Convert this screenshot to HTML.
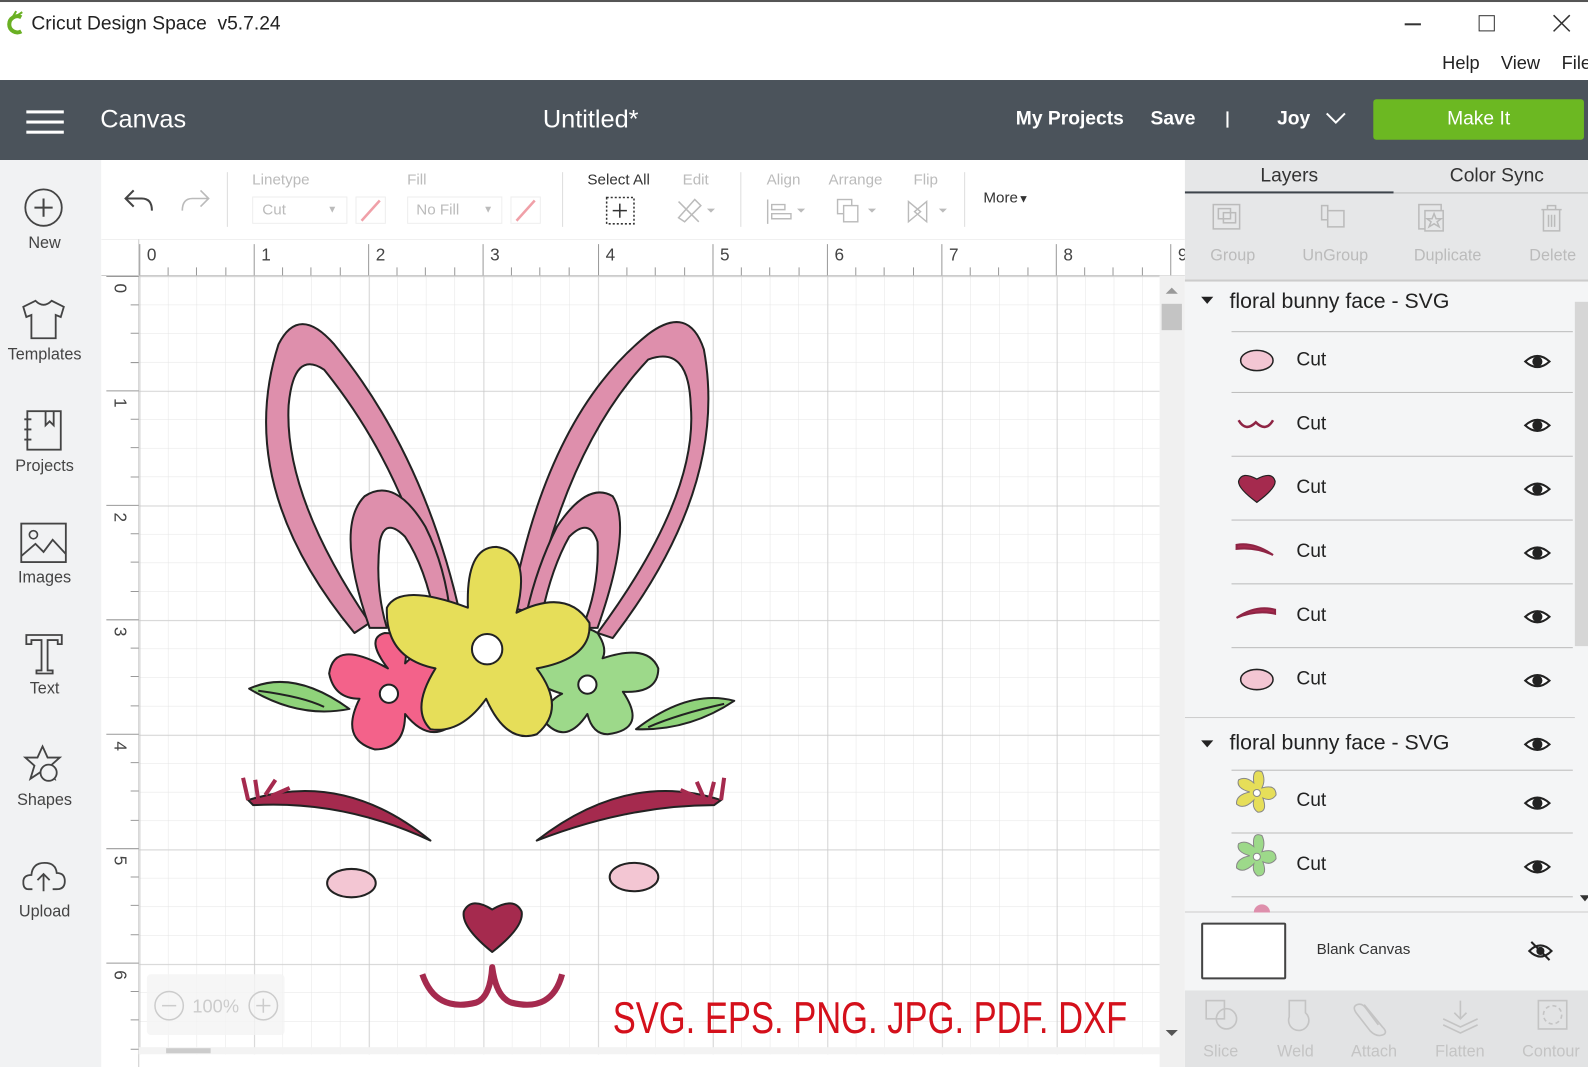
<!DOCTYPE html>
<html><head><meta charset="utf-8">
<style>
*{margin:0;padding:0;box-sizing:border-box}
body{width:1588px;height:1054px;overflow:hidden;background:#fff;font-family:"Liberation Sans",sans-serif;position:relative;color:#222}
#w{position:absolute;left:0;top:0;width:1568px;height:1041px;transform:scale(1.01276);transform-origin:0 0}
.a{position:absolute}
.t{white-space:nowrap}
</style></head><body><div id="w">
<!-- title bar -->
<div class="a" style="left:0;top:0;width:1588px;height:2px;background:#555"></div>
<svg class="a" style="left:4px;top:10px" width="22" height="26"><path d="M17 7 A8 8 0 1 0 17 21" stroke="#6ab023" stroke-width="4" fill="none"/><path d="M9 6 L12 1 M12 6 L18 2" stroke="#6ab023" stroke-width="2"/></svg>
<div class="a t" style="left:31px;top:13px;font-size:19px;color:#222">Cricut Design Space&nbsp; v5.7.24</div>
<div class="a" style="left:1387px;top:23px;width:16px;height:1.5px;background:#333"></div>
<div class="a" style="left:1460px;top:15px;width:16px;height:16px;border:1.5px solid #333"></div>
<svg class="a" style="left:1533px;top:14px" width="18" height="18"><path d="M1 1L17 17M17 1L1 17" stroke="#333" stroke-width="1.5"/></svg>
<div class="a t" style="left:1424px;top:52px;font-size:18px">Help</div>
<div class="a t" style="left:1482px;top:52px;font-size:18px">View</div>
<div class="a t" style="left:1542px;top:52px;font-size:18px">File</div>
<!-- header -->
<div class="a" style="left:0;top:79px;width:1588px;height:79px;background:#4b535b"></div>
<div class="a" style="left:26px;top:109px;width:37px;height:3px;background:#fff;box-shadow:0 10px 0 #fff,0 20px 0 #fff"></div>
<div class="a t" style="left:99px;top:104px;font-size:25px;color:#fff">Canvas</div>
<div class="a t" style="left:536px;top:104px;font-size:25px;color:#fff">Untitled*</div>
<div class="a t" style="left:1003px;top:107px;font-size:19px;color:#fff;font-weight:bold">My Projects</div>
<div class="a t" style="left:1136px;top:107px;font-size:19px;color:#fff;font-weight:bold">Save</div>
<div class="a" style="left:1211px;top:110px;width:2px;height:16px;background:#fff"></div>
<div class="a t" style="left:1261px;top:107px;font-size:19px;color:#fff;font-weight:bold">Joy</div>
<svg class="a" style="left:1309px;top:111px" width="20" height="12"><path d="M1 1L10 10L19 1" stroke="#fff" stroke-width="2" fill="none"/></svg>
<div class="a" style="left:1356px;top:98px;width:208px;height:40px;background:#6cb822;border-radius:3px;color:#fff;font-size:19px;text-align:center;line-height:40px">Make It</div>
<!-- left sidebar -->
<div class="a" style="left:0;top:158px;width:100px;height:896px;background:#f1f2f3"></div>
<svg class="a" style="left:23px;top:185px" width="40" height="40"><circle cx="20" cy="20" r="18" fill="none" stroke="#444" stroke-width="1.8"/><path d="M20 11V29M11 20H29" stroke="#444" stroke-width="2"/></svg>
<div class="a t" style="left:0;width:88px;text-align:center;top:232px;font-size:16px;color:#444">New</div>
<svg class="a" style="left:20px;top:295px" width="46" height="42"><path d="M15 2L3 8L6 18L11 16V39H35V16L40 18L43 8L31 2Q23 10 15 2Z" fill="none" stroke="#444" stroke-width="1.8"/></svg>
<div class="a t" style="left:0;width:88px;text-align:center;top:342px;font-size:16px;color:#444">Templates</div>
<svg class="a" style="left:23px;top:404px" width="42" height="42"><rect x="4" y="2" width="33" height="38" fill="none" stroke="#444" stroke-width="1.8"/><path d="M1 10H8M1 20H8M1 30H8M22 2V16L26 12L30 16V2" fill="none" stroke="#444" stroke-width="1.8"/></svg>
<div class="a t" style="left:0;width:88px;text-align:center;top:452px;font-size:16px;color:#444">Projects</div>
<svg class="a" style="left:19px;top:515px" width="48" height="42"><rect x="2" y="2" width="44" height="38" fill="none" stroke="#444" stroke-width="1.8"/><circle cx="14" cy="13" r="4" fill="none" stroke="#444" stroke-width="1.6"/><path d="M2 34L16 22L24 30L33 18L46 32" fill="none" stroke="#444" stroke-width="1.8"/></svg>
<div class="a t" style="left:0;width:88px;text-align:center;top:562px;font-size:16px;color:#444">Images</div>
<svg class="a" style="left:24px;top:625px" width="40" height="42"><path d="M2 2H37V11H33V7H23V37H28V40H12V37H17V7H7V11H2Z" fill="none" stroke="#444" stroke-width="1.8"/></svg>
<div class="a t" style="left:0;width:88px;text-align:center;top:672px;font-size:16px;color:#444">Text</div>
<svg class="a" style="left:22px;top:735px" width="42" height="42"><path d="M20 2L25 13L37 13L28 21L32 34L20 26L8 34L12 21L3 13L15 13Z" fill="none" stroke="#444" stroke-width="1.8"/><circle cx="26" cy="28" r="8" fill="#f1f2f3" stroke="#444" stroke-width="1.8"/></svg>
<div class="a t" style="left:0;width:88px;text-align:center;top:782px;font-size:16px;color:#444">Shapes</div>
<svg class="a" style="left:22px;top:848px" width="44" height="34"><path d="M10 30H6Q1 30 1 23Q1 16 9 16Q10 4 22 4Q33 4 34 14Q42 14 42 22Q42 30 34 30H30" fill="none" stroke="#444" stroke-width="1.8"/><path d="M21 32V16M15 21L21 15L27 21" fill="none" stroke="#444" stroke-width="1.8"/></svg>
<div class="a t" style="left:0;width:88px;text-align:center;top:892px;font-size:16px;color:#444">Upload</div>
<!-- toolbar -->
<div class="a" style="left:100px;top:158px;width:1070px;height:78px;background:#fff"></div>
<svg class="a" style="left:120px;top:182px" width="90" height="30"><path d="M12 6L4 14L12 22M4 14H20Q30 14 30 26" fill="none" stroke="#444" stroke-width="2"/><path d="M78 6L86 14L78 22M86 14H70Q60 14 60 26" fill="none" stroke="#bbb" stroke-width="1.6"/></svg>
<div class="a" style="left:224px;top:170px;width:1px;height:54px;background:#ddd"></div>
<div class="a t" style="left:249px;top:169px;font-size:15px;color:#bbb">Linetype</div>
<div class="a" style="left:249px;top:194px;width:94px;height:27px;border:1px solid #eee;color:#bbb;font-size:15px;padding:4px 9px">Cut<span style="float:right;font-size:10px;margin-top:3px">▼</span></div>
<div class="a" style="left:351px;top:194px;width:30px;height:27px;border:1px solid #eee"></div>
<svg class="a" style="left:354px;top:196px" width="24" height="24"><path d="M3 22L21 2" stroke="#f0a0a8" stroke-width="2.5"/></svg>
<div class="a t" style="left:402px;top:169px;font-size:15px;color:#bbb">Fill</div>
<div class="a" style="left:402px;top:194px;width:94px;height:27px;border:1px solid #eee;color:#bbb;font-size:15px;padding:4px 8px">No Fill<span style="float:right;font-size:10px;margin-top:3px">▼</span></div>
<div class="a" style="left:504px;top:194px;width:30px;height:27px;border:1px solid #eee"></div>
<svg class="a" style="left:507px;top:196px" width="24" height="24"><path d="M3 22L21 2" stroke="#f0a0a8" stroke-width="2.5"/></svg>
<div class="a" style="left:555px;top:170px;width:1px;height:54px;background:#ddd"></div>
<div class="a t" style="left:580px;top:169px;font-size:15px;color:#333">Select All</div>
<svg class="a" style="left:597px;top:193px" width="32" height="30"><rect x="2" y="2" width="27" height="26" fill="none" stroke="#333" stroke-width="1.5" stroke-dasharray="2 2"/><path d="M15 8V22M8 15H22" stroke="#333" stroke-width="1.5"/></svg>
<div class="a t" style="left:674px;top:169px;font-size:15px;color:#bbb">Edit</div>
<svg class="a" style="left:666px;top:193px" width="44" height="30"><path d="M4 22L20 4L26 10L10 26ZM4 6L24 26" fill="none" stroke="#bbb" stroke-width="1.5"/><path d="M32 13L36 17L40 13Z" fill="#bbb"/></svg>
<div class="a" style="left:731px;top:170px;width:1px;height:54px;background:#ddd"></div>
<div class="a t" style="left:757px;top:169px;font-size:15px;color:#bbb">Align</div>
<div class="a t" style="left:818px;top:169px;font-size:15px;color:#bbb">Arrange</div>
<div class="a t" style="left:902px;top:169px;font-size:15px;color:#bbb">Flip</div>
<svg class="a" style="left:755px;top:193px" width="190" height="32"><path d="M3 4V28M7 9H20V14H7ZM7 18H26V23H7Z" fill="none" stroke="#bbb" stroke-width="1.4"/><path d="M32 13L36 17L40 13Z" fill="#bbb"/><rect x="72" y="4" width="14" height="14" fill="none" stroke="#bbb" stroke-width="1.4"/><rect x="78" y="10" width="14" height="16" fill="#fff" stroke="#bbb" stroke-width="1.4"/><path d="M102 13L106 17L110 13Z" fill="#bbb"/><path d="M142 6L142 26L154 16Z M160 6L160 26L148 16Z" fill="none" stroke="#bbb" stroke-width="1.4"/><path d="M172 13L176 17L180 13Z" fill="#bbb"/></svg>
<div class="a" style="left:952px;top:170px;width:1px;height:54px;background:#ddd"></div>
<div class="a t" style="left:971px;top:187px;font-size:15px;color:#333">More<span style="font-size:11px">▼</span></div>
<!-- canvas -->
<svg class="a" style="left:100px;top:236px" width="1070" height="818">
<defs>
<pattern id="mi" x="38" y="37" width="28.3" height="28.3" patternUnits="userSpaceOnUse"><path d="M28.3 0V28.3M0 28.3H28.3" stroke="#e4e4e4" stroke-width="1" fill="none"/></pattern>
<pattern id="ma" x="38" y="37" width="113.2" height="113.2" patternUnits="userSpaceOnUse"><path d="M0 0V113.2M0 0H113.2" stroke="#c8c8c8" stroke-width="1.2" fill="none"/></pattern>
</defs>
<rect x="0" y="0" width="1070" height="818" fill="#fff"/>
<rect x="37" y="36" width="1008" height="769" fill="url(#mi)"/>
<rect x="37" y="36" width="1008" height="769" fill="url(#ma)"/>
<rect x="0" y="0" width="1070" height="36" fill="#fff"/>
<rect x="0" y="0" width="37" height="818" fill="#fff"/>
<line x1="0" y1="36" x2="1070" y2="36" stroke="#ccc"/>
<line x1="37" y1="0" x2="37" y2="818" stroke="#ccc"/>
<line x1="0" y1="0" x2="1070" y2="0" stroke="#e2e2e2"/>
<g stroke="#999" stroke-width="1">
<path d="M38 5V36M151 5V36M264 5V36M377 5V36M491 5V36M604 5V36M717 5V36M830 5V36M943 5V36M1056 5V36"/>
<path d="M66 28V36M94 28V36M123 28V36M179 28V36M207 28V36M236 28V36M292 28V36M320 28V36M349 28V36M405 28V36M433 28V36M462 28V36M519 28V36M547 28V36M576 28V36M632 28V36M660 28V36M689 28V36M745 28V36M773 28V36M802 28V36M858 28V36M886 28V36M915 28V36M971 28V36M999 28V36M1028 28V36"/>
<path d="M5 37H37M5 150H37M5 263H37M5 376H37M5 489H37M5 602H37M5 715H37"/>
<path d="M29 65H37M29 93H37M29 122H37M29 178H37M29 206H37M29 235H37M29 291H37M29 319H37M29 348H37M29 404H37M29 432H37M29 461H37M29 517H37M29 545H37M29 574H37M29 630H37M29 658H37M29 687H37M29 743H37M29 771H37M29 800H37"/>
</g>
<g font-size="17" fill="#444" font-family="Liberation Sans">
<text x="45" y="21">0</text><text x="158" y="21">1</text><text x="271" y="21">2</text><text x="384" y="21">3</text><text x="498" y="21">4</text><text x="611" y="21">5</text><text x="724" y="21">6</text><text x="837" y="21">7</text><text x="950" y="21">8</text><text x="1063" y="21">9</text>
<g transform="rotate(90)"><text x="44" y="-13">0</text><text x="157" y="-13">1</text><text x="270" y="-13">2</text><text x="383" y="-13">3</text><text x="496" y="-13">4</text><text x="609" y="-13">5</text><text x="722" y="-13">6</text></g>
</g>
<rect x="1045" y="36" width="25" height="782" fill="#f0f0f0"/>
<rect x="1047" y="64" width="20" height="26" fill="#c4c4c4"/>
<path d="M1051 54L1057 48L1063 54Z" fill="#999"/>
<path d="M1051 781L1057 787L1063 781Z" fill="#555"/>
<rect x="37" y="798" width="1008" height="7" fill="#f3f3f3"/>
<rect x="64" y="799" width="44" height="5" fill="#ccc"/>
<rect x="45" y="726" width="136" height="60" rx="4" fill="#f4f4f4" opacity="0.8"/>
<circle cx="67" cy="757" r="14" fill="none" stroke="#ccc" stroke-width="1.5"/><path d="M60 757H74" stroke="#ccc" stroke-width="1.5"/>
<text x="90" y="764" font-size="18" fill="#ccc">100%</text>
<circle cx="160" cy="757" r="14" fill="none" stroke="#ccc" stroke-width="1.5"/><path d="M153 757H167M160 750V764" stroke="#ccc" stroke-width="1.5"/>
<g transform="translate(-100,-236)" stroke="#222" stroke-width="2" stroke-linejoin="round">
<path d="M350 625Q230 480 275 340Q295 300 330 340Q420 450 455 610L435 615Q405 470 320 365Q290 345 285 400Q280 490 365 615Z" fill="#de8fac"/>
<path d="M605 630Q720 480 695 345Q680 300 640 330Q540 410 505 600L525 605Q560 440 640 355Q680 340 682 400Q690 490 590 625Z" fill="#de8fac"/>
<path d="M365 620Q330 520 360 490Q390 470 420 520Q440 560 445 610L430 612Q420 560 400 530Q380 510 375 535Q370 580 382 620Z" fill="#de8fac"/>
<path d="M590 620Q625 520 605 490Q580 475 550 520Q530 560 520 605L535 607Q545 560 562 530Q582 510 590 535Q592 580 575 620Z" fill="#de8fac"/>
<path d="M246 680Q290 660 345 700Q295 710 246 680Z" fill="#8fd37a"/>
<path d="M255 682Q300 688 320 698" fill="none"/>
<path d="M725 692Q680 680 628 720Q680 722 725 692Z" fill="#8fd37a"/>
<path d="M715 695Q670 705 640 718" fill="none"/>
<path d="M383 660Q330 630 325 665Q330 690 355 690Q335 730 370 740Q400 740 400 705Q420 730 440 720Q455 700 425 680Q455 665 440 645Q420 635 400 655Q405 625 380 625Q360 630 383 660Z" fill="#f3628a"/>
<circle cx="384" cy="685" r="9" fill="#fff"/>
<path d="M548 640Q565 610 590 625Q600 640 595 650Q640 635 650 660Q650 685 615 683Q640 720 600 725Q585 725 580 705Q560 735 540 715Q535 695 555 685Q520 675 530 655Q540 645 548 640Z" fill="#9dd98a"/>
<circle cx="580" cy="676" r="9" fill="#fff"/>
<path d="M462 600Q460 540 490 540Q525 545 510 605Q560 580 582 615Q585 650 530 660Q560 700 530 725Q500 735 480 690Q455 725 425 720Q405 700 430 660Q380 650 382 600Q395 575 462 600Z" fill="#e6de59"/>
<circle cx="481" cy="641" r="15" fill="#fff"/>
<path d="M245 790Q340 760 425 830Q340 790 250 795Z" fill="#a52a4e"/>
<path d="M245 790L240 768M255 790L252 770M262 785L272 770M268 786L286 778" fill="none" stroke="#a52a4e" stroke-width="4"/>
<path d="M712 790Q620 760 530 830Q620 795 705 795Z" fill="#a52a4e"/>
<path d="M712 790L715 768M700 792L705 772M695 788L688 772M690 788L672 780" fill="none" stroke="#a52a4e" stroke-width="4"/>
<ellipse cx="347" cy="872" rx="24" ry="14" fill="#f3c6d3"/>
<ellipse cx="626" cy="866" rx="24" ry="14" fill="#f3c6d3"/>
<path d="M486 940Q455 915 458 900Q465 885 486 898Q508 885 515 900Q518 915 486 940Z" fill="#a52a4e"/>
<path d="M417 962Q430 1000 470 990Q484 985 486 955Q490 985 505 990Q545 1000 555 962" fill="none" stroke="#a52a4e" stroke-width="6"/>
</g>
<text x="505" y="784" font-size="44" fill="#d4101b" font-family="Liberation Sans Narrow, Liberation Sans" textLength="508" lengthAdjust="spacingAndGlyphs">SVG. EPS. PNG. JPG. PDF. DXF</text>
</svg>
<!-- right panel -->
<div class="a" style="left:1170px;top:158px;width:418px;height:896px;background:#f4f5f6"></div>
<div class="a" style="left:1170px;top:158px;width:418px;height:120px;background:#e6e7e8"></div>
<div class="a t" style="left:1170px;width:206px;text-align:center;top:163px;font-size:19px;color:#333">Layers</div>
<div class="a t" style="left:1376px;width:204px;text-align:center;top:163px;font-size:19px;color:#333">Color Sync</div>
<div class="a" style="left:1170px;top:189px;width:206px;height:2px;background:#3d444b"></div>
<div class="a" style="left:1376px;top:190px;width:212px;height:1px;background:#bbb"></div>
<svg class="a" style="left:1195px;top:198px" width="380" height="36" stroke="#bbb" stroke-width="1.5" fill="none"><rect x="3" y="4" width="26" height="24"/><rect x="8" y="8" width="12" height="10"/><rect x="13" y="12" width="12" height="10"/><rect x="110" y="5" width="6" height="14"/><rect x="116" y="10" width="16" height="16"/><rect x="206" y="4" width="22" height="24"/><rect x="212" y="10" width="18" height="20" fill="#e6e7e8"/><path d="M221 13L223 18L228 18L224 21L226 26L221 23L216 26L218 21L214 18L219 18Z"/><path d="M327 9H347M333 9V5H341V9M329 9V30H345V9M334 14V26M337 14V26M340 14V26"/></svg>
<div class="a t" style="left:1195px;top:244px;font-size:16px;color:#bbb">Group</div>
<div class="a t" style="left:1286px;top:244px;font-size:16px;color:#bbb">UnGroup</div>
<div class="a t" style="left:1396px;top:244px;font-size:16px;color:#bbb">Duplicate</div>
<div class="a t" style="left:1510px;top:244px;font-size:16px;color:#bbb">Delete</div>
<div class="a" style="left:1170px;top:276px;width:418px;height:2px;background:#ccc"></div>
<div class="a" style="left:1555px;top:298px;width:13px;height:340px;background:#d6d6d6"></div>
<div class="a" style="left:1170px;top:708px;width:385px;height:1px;background:#ccc"></div>
<div class="a" style="left:1170px;top:900px;width:418px;height:1px;background:#ccc"></div>
<div class="a" style="left:1186px;top:293px;border-left:6px solid transparent;border-right:6px solid transparent;border-top:7px solid #222"></div>
<div class="a t" style="left:1214px;top:286px;font-size:21px;color:#222">floral bunny face - SVG</div>
<div class="a" style="left:1216px;top:327px;width:337px;height:1px;background:#bbb"></div>
<div class="a" style="left:1216px;top:387px;width:337px;height:1px;background:#bbb"></div>
<div class="a" style="left:1216px;top:450px;width:337px;height:1px;background:#bbb"></div>
<div class="a" style="left:1216px;top:513px;width:337px;height:1px;background:#bbb"></div>
<div class="a" style="left:1216px;top:576px;width:337px;height:1px;background:#bbb"></div>
<div class="a" style="left:1216px;top:639px;width:337px;height:1px;background:#bbb"></div>
<div class="a" style="left:1216px;top:760px;width:337px;height:1px;background:#bbb"></div>
<div class="a" style="left:1216px;top:822px;width:337px;height:1px;background:#bbb"></div>
<div class="a" style="left:1216px;top:885px;width:337px;height:1px;background:#bbb"></div>
<div class="a t" style="left:1280px;top:345px;font-size:19px">Cut</div>
<div class="a t" style="left:1280px;top:408px;font-size:19px">Cut</div>
<div class="a t" style="left:1280px;top:471px;font-size:19px">Cut</div>
<div class="a t" style="left:1280px;top:534px;font-size:19px">Cut</div>
<div class="a t" style="left:1280px;top:597px;font-size:19px">Cut</div>
<div class="a t" style="left:1280px;top:660px;font-size:19px">Cut</div>
<div class="a t" style="left:1280px;top:780px;font-size:19px">Cut</div>
<div class="a t" style="left:1280px;top:843px;font-size:19px">Cut</div>
<div class="a" style="left:1186px;top:731px;border-left:6px solid transparent;border-right:6px solid transparent;border-top:7px solid #222"></div>
<div class="a t" style="left:1214px;top:722px;font-size:21px;color:#222">floral bunny face - SVG</div>
<svg class="a" style="left:1210px;top:330px" width="330" height="560">
<defs><g id="eye"><path d="M-12 0Q0 -11 12 0Q0 11 -12 0Z" fill="#fff" stroke="#222" stroke-width="2"/><circle r="5" fill="#222"/></g></defs>
<use href="#eye" x="308" y="-30"/><use href="#eye" x="308" y="27"/><use href="#eye" x="308" y="90"/><use href="#eye" x="308" y="153"/><use href="#eye" x="308" y="216"/><use href="#eye" x="308" y="279"/><use href="#eye" x="308" y="342"/><use href="#eye" x="308" y="405"/><use href="#eye" x="308" y="463"/><use href="#eye" x="308" y="526"/>
<ellipse cx="31" cy="26" rx="16" ry="10" fill="#f3c6d3" stroke="#222" stroke-width="1.5"/>
<path d="M13 85Q20 97 30 87Q40 97 47 85" fill="none" stroke="#8e2444" stroke-width="2.5"/>
<path d="M31 166Q12 152 13 145Q16 135 31 143Q46 135 49 145Q50 152 31 166Z" fill="#a52a4e" stroke="#222" stroke-width="1.2"/>
<path d="M11 208Q28 205 47 218Q30 210 11 212Z" fill="#a52a4e" stroke="#8e2444" stroke-width="2"/>
<path d="M49 272Q30 267 11 280Q30 272 49 276Z" fill="#a52a4e" stroke="#8e2444" stroke-width="2"/>
<ellipse cx="31" cy="341" rx="16" ry="10" fill="#f3c6d3" stroke="#222" stroke-width="1.5"/>
<path d="M28 443Q26 428 36 432Q40 440 36 448Q50 444 50 455Q45 462 37 458Q42 472 32 472Q26 468 28 460Q18 470 11 464Q10 455 24 452Q10 448 13 440Q20 436 28 443Z" fill="#e6de59" stroke="#888" stroke-width="1"/>
<circle cx="31" cy="453" r="3.5" fill="#fff" stroke="#888"/>
<path d="M28 506Q26 491 36 495Q40 503 36 511Q50 507 50 518Q45 525 37 521Q42 535 32 535Q26 531 28 523Q18 533 11 527Q10 518 24 515Q10 511 13 503Q20 499 28 506Z" fill="#9dd98a" stroke="#888" stroke-width="1"/>
<circle cx="31" cy="516" r="3.5" fill="#fff" stroke="#888"/>
</svg>
<div class="a" style="left:1238px;top:893px;width:16px;height:8px;border-radius:8px 8px 0 0;background:#de8fac"></div>
<div class="a" style="left:1560px;top:884px;border-left:5px solid transparent;border-right:5px solid transparent;border-top:6px solid #333"></div>
<div class="a" style="left:1186px;top:911px;width:84px;height:56px;border:2px solid #444;border-radius:2px;background:#fff"></div>
<div class="a t" style="left:1300px;top:929px;font-size:15px;color:#333">Blank Canvas</div>
<svg class="a" style="left:1508px;top:928px" width="26" height="22"><path d="M2 11Q13 0 24 11Q13 22 2 11Z" fill="none" stroke="#222" stroke-width="2"/><circle cx="13" cy="11" r="4" fill="#222"/><path d="M4 2L22 20" stroke="#222" stroke-width="2"/></svg>
<div class="a" style="left:1170px;top:978px;width:418px;height:76px;background:#e2e3e4"></div>
<svg class="a" style="left:1185px;top:984px" width="400" height="40" stroke="#c4c4c4" stroke-width="1.6" fill="none"><rect x="6" y="4" width="18" height="18"/><circle cx="26" cy="22" r="10"/><path d="M88 4H104V16A10 10 0 1 1 88 20Z"/><path d="M162 8L180 30Q186 36 180 38Q174 40 168 34L154 16Q150 10 155 8Q160 6 164 12L176 28"/><path d="M257 4V22M251 16L257 22L263 16M240 22L257 30L274 22M240 28L257 36L274 28"/><rect x="334" y="4" width="28" height="28"/><circle cx="348" cy="18" r="9" stroke-dasharray="4 3"/></svg>
<div class="a t" style="left:1188px;top:1030px;font-size:16px;color:#c4c4c4">Slice</div>
<div class="a t" style="left:1261px;top:1030px;font-size:16px;color:#c4c4c4">Weld</div>
<div class="a t" style="left:1334px;top:1030px;font-size:16px;color:#c4c4c4">Attach</div>
<div class="a t" style="left:1417px;top:1030px;font-size:16px;color:#c4c4c4">Flatten</div>
<div class="a t" style="left:1503px;top:1030px;font-size:16px;color:#c4c4c4">Contour</div>
</div></body></html>
